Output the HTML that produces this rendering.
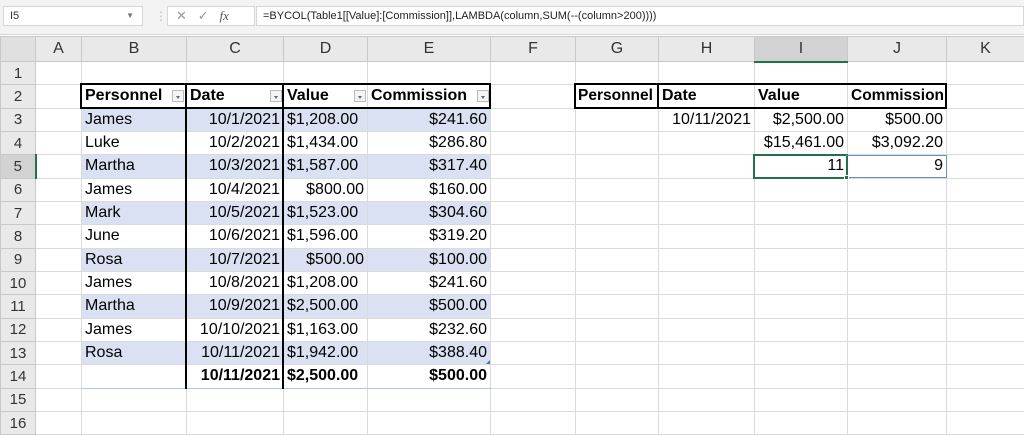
<!DOCTYPE html>
<html><head><meta charset="utf-8"><style>
*{box-sizing:border-box;margin:0;padding:0}
body{width:1024px;height:430px;overflow:hidden;background:#fff;font-family:"Liberation Sans",sans-serif;position:relative}
#fb{position:absolute;left:0;top:0;width:1024px;height:35px;background:#f3f3f3;border-bottom:1px solid #d6d6d6}
.nb{position:absolute;top:6px;height:20px;background:#fff;border:1px solid #d6d6d6;font-size:11px;color:#333;line-height:18px;padding-left:6px}
table{position:absolute;left:0;top:36px;width:1024px;border-collapse:collapse;table-layout:fixed}
td{border:1px solid #dadada;height:23.33px;font-size:16px;letter-spacing:0;white-space:nowrap;overflow:hidden;padding:0 3px 0 3px;color:#000}
tr.h td{height:25px;background:#e9e9e9;text-align:center;color:#333;border-color:#c8c8c8;font-size:16px}
td.rh{background:#e9e9e9;text-align:center;color:#333;border-color:#c8c8c8;font-size:15px;letter-spacing:0}
.r{text-align:right}.b{font-weight:bold}
.bl{background:#d9e1f2}
.tb{border-bottom:1px solid #b4c6e7}
.ov{position:absolute}
.dd{position:absolute;width:12px;height:12px;border:1px solid #bbb;background:#f4f4f4;top:90px}
.dd:after{content:"";position:absolute;left:3px;top:5px;border-left:2.5px solid transparent;border-right:2.5px solid transparent;border-top:3px solid #666}
</style></head><body>
<div id="fb">
<div class="nb" style="left:3px;width:140px">I5<span style="position:absolute;right:8px;font-size:8px;color:#777">▼</span></div>
<div style="position:absolute;left:155px;top:9px;font-size:12px;color:#bbb">⋮</div>
<div class="nb" style="left:167px;width:88px;color:#999;font-size:13px;padding-left:8px">✕&nbsp;&nbsp;&nbsp;✓&nbsp;&nbsp;&nbsp;<i style="font-family:'Liberation Serif';color:#555">fx</i></div>
<div class="nb" style="left:256px;width:768px;font-size:11px;color:#222">=BYCOL(Table1[[Value]:[Commission]],LAMBDA(column,SUM(--(column&gt;200))))</div>
</div>
<table>
<colgroup><col style="width:35px"><col style="width:46px"><col style="width:105px"><col style="width:97px"><col style="width:84px"><col style="width:123px"><col style="width:85px"><col style="width:83px"><col style="width:96px"><col style="width:93px"><col style="width:99px"><col style="width:78px"></colgroup>
<tr class="h"><td style="background:#e0e0e0"></td><td>A</td><td>B</td><td>C</td><td>D</td><td>E</td><td>F</td><td>G</td><td>H</td><td style="background:#d2d2d2;border-bottom:2px solid #217346">I</td><td>J</td><td>K</td></tr>
<tr><td class="rh">1</td><td></td><td></td><td></td><td></td><td></td><td></td><td></td><td></td><td></td><td></td><td></td></tr>
<tr><td class="rh">2</td><td></td><td class="b">Personnel</td><td class="b">Date</td><td class="b">Value</td><td class="b">Commission</td><td></td><td class="b" style="padding-left:2px;font-size:15.5px">Personnel</td><td class="b">Date</td><td class="b">Value</td><td class="b" style="font-size:15.5px">Commission</td><td></td></tr>
<tr><td class="rh">3</td><td></td><td class="bl">James</td><td class="bl r">10/1/2021</td><td class="bl">$1,208.00</td><td class="bl r">$241.60</td><td></td><td></td><td class="r">10/11/2021</td><td class="r">$2,500.00</td><td class="r">$500.00</td><td></td></tr>
<tr><td class="rh">4</td><td></td><td>Luke</td><td class="r">10/2/2021</td><td>$1,434.00</td><td class="r">$286.80</td><td></td><td></td><td></td><td class="r">$15,461.00</td><td class="r">$3,092.20</td><td></td></tr>
<tr><td class="rh" style="background:#d2d2d2;border-right:2px solid #217346">5</td><td></td><td class="bl">Martha</td><td class="bl r">10/3/2021</td><td class="bl">$1,587.00</td><td class="bl r">$317.40</td><td></td><td></td><td></td><td class="r">11</td><td class="r">9</td><td></td></tr>
<tr><td class="rh">6</td><td></td><td>James</td><td class="r">10/4/2021</td><td class="r">$800.00</td><td class="r">$160.00</td><td></td><td></td><td></td><td></td><td></td><td></td></tr>
<tr><td class="rh">7</td><td></td><td class="bl">Mark</td><td class="bl r">10/5/2021</td><td class="bl">$1,523.00</td><td class="bl r">$304.60</td><td></td><td></td><td></td><td></td><td></td><td></td></tr>
<tr><td class="rh">8</td><td></td><td>June</td><td class="r">10/6/2021</td><td>$1,596.00</td><td class="r">$319.20</td><td></td><td></td><td></td><td></td><td></td><td></td></tr>
<tr><td class="rh">9</td><td></td><td class="bl">Rosa</td><td class="bl r">10/7/2021</td><td class="bl r">$500.00</td><td class="bl r">$100.00</td><td></td><td></td><td></td><td></td><td></td><td></td></tr>
<tr><td class="rh">10</td><td></td><td>James</td><td class="r">10/8/2021</td><td>$1,208.00</td><td class="r">$241.60</td><td></td><td></td><td></td><td></td><td></td><td></td></tr>
<tr><td class="rh">11</td><td></td><td class="bl">Martha</td><td class="bl r">10/9/2021</td><td class="bl">$2,500.00</td><td class="bl r">$500.00</td><td></td><td></td><td></td><td></td><td></td><td></td></tr>
<tr><td class="rh">12</td><td></td><td>James</td><td class="r">10/10/2021</td><td>$1,163.00</td><td class="r">$232.60</td><td></td><td></td><td></td><td></td><td></td><td></td></tr>
<tr><td class="rh">13</td><td></td><td class="bl">Rosa</td><td class="bl r">10/11/2021</td><td class="bl">$1,942.00</td><td class="bl r">$388.40</td><td></td><td></td><td></td><td></td><td></td><td></td></tr>
<tr><td class="rh">14</td><td></td><td class="tb"></td><td class="r b tb">10/11/2021</td><td class="b tb">$2,500.00</td><td class="r b tb">$500.00</td><td></td><td></td><td></td><td></td><td></td><td></td></tr>
<tr><td class="rh">15</td><td></td><td></td><td></td><td></td><td></td><td></td><td></td><td></td><td></td><td></td><td></td></tr>
<tr><td class="rh">16</td><td></td><td></td><td></td><td></td><td></td><td></td><td></td><td></td><td></td><td></td><td></td></tr>
</table>
<div class="ov" style="left:80px;top:83px;width:411px;height:26px;border:2px solid #000"></div>
<div class="ov" style="left:185px;top:83px;width:2px;height:306px;background:#000"></div>
<div class="ov" style="left:282px;top:83px;width:2px;height:306px;background:#000"></div>
<div class="dd" style="left:172px"></div><div class="dd" style="left:270px"></div><div class="dd" style="left:354px"></div><div class="dd" style="left:477px"></div>
<div class="ov" style="left:486px;top:360px;width:0;height:0;border-left:4px solid transparent;border-bottom:4px solid #4472c4"></div>
<div class="ov" style="left:574px;top:83px;width:373px;height:26px;border:2px solid #000"></div>
<div class="ov" style="left:657px;top:83px;width:2px;height:26px;background:#000"></div>
<div class="ov" style="left:753px;top:154px;width:95px;height:25px;border:2px solid #217346"></div>
<div class="ov" style="left:846px;top:155px;width:101px;height:23px;border:1px solid #6a8fc8;border-left:none"></div>
<div class="ov" style="left:844px;top:175px;width:5px;height:5px;background:#217346;border:1px solid #fff"></div>
</body></html>
